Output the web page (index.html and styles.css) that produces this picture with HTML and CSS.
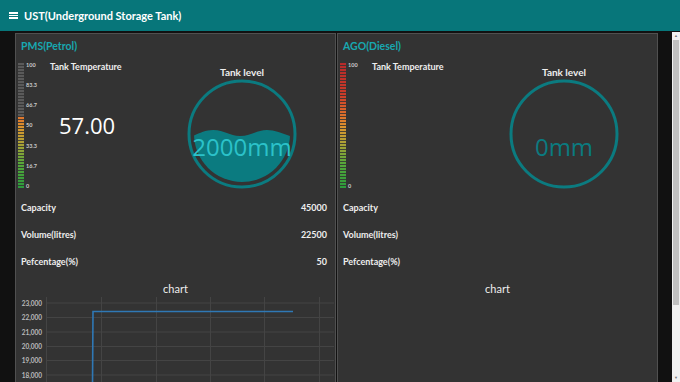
FILE: index.html
```html
<!DOCTYPE html>
<html lang="en">
<head>
    <meta charset="UTF-8">
    <meta name="viewport" content="width=device-width, initial-scale=1.0">
    <title>UST(Underground Storage Tank)</title>
    <link rel="stylesheet" href="styles.css">
</head>
<body>
    <div class="toolbar">
        <span class="menu-icon"><i></i><i></i><i></i></span>
        <span class="toolbar-title">UST(Underground Storage Tank)</span>
    </div>
    <div class="main">
        <div class="groups">
            <div class="group">
                <div class="group-title">PMS(Petrol)</div>
                <div class="top-row">
                    <div class="level-gauge">
                        <div class="bar"><div class="bar-empty" style="height: 43%"></div></div>
                        <div class="ticks">
                            <span>100</span><span>83.3</span><span>66.7</span><span>50</span><span>33.3</span><span>16.7</span><span>0</span>
                        </div>
                    </div>
                    <div class="temp">
                        <div class="widget-label">Tank Temperature</div>
                        <div class="temp-value">57.00</div>
                    </div>
                    <div class="tank">
                        <div class="tank-label">Tank level</div>
                        <svg class="tank-svg" width="110" height="110" viewBox="0 0 110 110">
                            <defs>
                                <clipPath id="innerPms"><circle cx="55" cy="55" r="48"/></clipPath>
                            </defs>
                            <circle cx="55" cy="55" r="53" fill="none" stroke="#0b7b80" stroke-width="3"/>
                            <path clip-path="url(#innerPms)" fill="#0b7b80"
                                  d="M0 59 C8 57 16 51 26 51 C38 51 42 57 53 57 C64 57 70 51 80 51 C90 51 100 57 110 59 L110 110 L0 110 Z"/>
                            <text class="tank-text light" x="55" y="77">2000mm</text>
                        </svg>
                    </div>
                </div>
                <div class="stat"><span>Capacity</span><span>45000</span></div>
                <div class="stat"><span>Volume(litres)</span><span>22500</span></div>
                <div class="stat"><span>Pefcentage(%)</span><span>50</span></div>
                <div class="chart-title">chart</div>
                <svg class="chart" width="318" height="90" viewBox="0 0 318 90">
                    <g class="grid">
                        <line x1="30" y1="6" x2="318" y2="6"/>
                        <line x1="30" y1="20.5" x2="318" y2="20.5"/>
                        <line x1="30" y1="35" x2="318" y2="35"/>
                        <line x1="30" y1="49.5" x2="318" y2="49.5"/>
                        <line x1="30" y1="63.5" x2="318" y2="63.5"/>
                        <line x1="30" y1="78" x2="318" y2="78"/>
                        <line x1="30.5" y1="0" x2="30.5" y2="90"/>
                        <line x1="85.5" y1="0" x2="85.5" y2="90"/>
                        <line x1="140.5" y1="0" x2="140.5" y2="90"/>
                        <line x1="194.5" y1="0" x2="194.5" y2="90"/>
                        <line x1="248.5" y1="0" x2="248.5" y2="90"/>
                        <line x1="303.5" y1="0" x2="303.5" y2="90"/>
                    </g>
                    <g class="axis">
                        <text x="26" y="8.5">23,000</text>
                        <text x="26" y="23">22,000</text>
                        <text x="26" y="37.5">21,000</text>
                        <text x="26" y="52">20,000</text>
                        <text x="26" y="66">19,000</text>
                        <text x="26" y="80.5">18,000</text>
                    </g>
                    <polyline class="series" points="76.5,90 77,14.5 277,14.5"/>
                </svg>
            </div>
            <div class="group">
                <div class="group-title">AGO(Diesel)</div>
                <div class="top-row">
                    <div class="level-gauge">
                        <div class="bar"></div>
                        <div class="ticks">
                            <span>100</span><span>0</span>
                        </div>
                    </div>
                    <div class="temp">
                        <div class="widget-label">Tank Temperature</div>
                    </div>
                    <div class="tank">
                        <div class="tank-label">Tank level</div>
                        <svg class="tank-svg" width="110" height="110" viewBox="0 0 110 110">
                            <circle cx="55" cy="55" r="53" fill="none" stroke="#0b7b80" stroke-width="3"/>
                            <text class="tank-text" x="55" y="77">0mm</text>
                        </svg>
                    </div>
                </div>
                <div class="stat"><span>Capacity</span><span></span></div>
                <div class="stat"><span>Volume(litres)</span><span></span></div>
                <div class="stat"><span>Pefcentage(%)</span><span></span></div>
                <div class="chart-title">chart</div>
            </div>
        </div>
        <div class="scrollbar">
            <div class="scroll-arrow">&#9650;</div>
            <div class="scroll-track"><div class="scroll-thumb"></div></div>
            <div class="scroll-arrow">&#9660;</div>
        </div>
    </div>
</body>
</html>
```

FILE: styles.css
```css
body {
    margin: 0;
    background-color: #111111;
    font-family: Lato, "Open Sans", sans-serif;
    color: #eeeeee;
    height: 382px;
    overflow: hidden;
}
.toolbar {
    height: 31px;
    background-color: #07767a;
    display: flex;
    align-items: center;
    padding-left: 9px;
    color: #ffffff;
}
.menu-icon {
    display: flex;
    flex-direction: column;
    gap: 1px;
    width: 9px;
    margin-right: 6px;
}
.menu-icon i {
    display: block;
    height: 1.5px;
    background: #ffffff;
}
.toolbar-title {
    font-weight: bold;
    font-size: 11px;
}
.main {
    display: flex;
    height: 351px;
    overflow: hidden;
}
.groups {
    flex: 1;
    display: flex;
    gap: 1px;
    padding: 2px 0 0 15px;
    align-items: flex-start;
}
.group {
    width: 319px;
    min-height: 360px;
    background-color: #333333;
    border: 1px solid #505050;
}
.group-title {
    color: #17a8b0;
    font-weight: bold;
    font-size: 10.5px;
    line-height: 15px;
    padding: 5px 0 0 5px;
}
.top-row {
    display: flex;
    margin-top: 8px;
    height: 127px;
}
.level-gauge {
    width: 34px;
    display: flex;
    padding-left: 2px;
    box-sizing: border-box;
}
.bar {
    position: relative;
    width: 6px;
    height: 125px;
    margin-top: 1px;
    background: linear-gradient(to bottom, #b52a2a 0%, #cc3b29 25%, #df7a2c 45%, #d9962e 52%, #a9a236 65%, #58a83a 80%, #2b9b3c 100%);
}
.bar::after {
    content: "";
    position: absolute;
    inset: 0;
    background: repeating-linear-gradient(to bottom, transparent 0, transparent 2px, rgba(51, 51, 51, 0.85) 2px, rgba(51, 51, 51, 0.85) 3px);
}
.bar-empty {
    background-color: #5a5a5a;
}
.ticks {
    display: flex;
    flex-direction: column;
    justify-content: space-between;
    margin-left: 2px;
    height: 127px;
    font-size: 5.5px;
    line-height: 6px;
    font-weight: bold;
    color: #cccccc;
}
.temp {
    width: 137px;
}
.widget-label {
    font-size: 9px;
    font-weight: bold;
    line-height: 10px;
}
.temp-value {
    font-family: "Open Sans", sans-serif;
    font-size: 22px;
    font-weight: 500;
    line-height: 26px;
    margin: 40px 0 0 9px;
    color: #ffffff;
}
.tank {
    width: 110px;
    display: flex;
    flex-direction: column;
    align-items: center;
}
.tank-label {
    font-size: 10px;
    font-weight: bold;
    line-height: 12px;
    padding-top: 4px;
}
.tank-svg {
    margin-top: 1px;
}
.tank-text {
    font-family: "Open Sans", sans-serif;
    font-size: 24px;
    text-anchor: middle;
    fill: #0b7b80;
}
.tank-text.light {
    fill: #2bc2c9;
}
.stat {
    display: flex;
    justify-content: space-between;
    height: 27px;
    align-items: center;
    padding: 0 8px 0 5px;
    font-size: 9px;
    font-weight: bold;
}
.top-row + .stat {
    margin-top: 5px;
}
.chart-title {
    text-align: center;
    font-size: 11px;
    line-height: 14px;
    margin-top: 7px;
}
.chart {
    display: block;
    margin-top: 1px;
}
.grid line {
    stroke: #444444;
    stroke-width: 1;
}
.axis text {
    font-family: Lato, sans-serif;
    font-size: 6.5px;
    font-weight: bold;
    fill: #bbbbbb;
    text-anchor: end;
}
.series {
    fill: none;
    stroke: #2f78b5;
    stroke-width: 1.6;
}
.scrollbar {
    width: 8px;
    margin-top: 1px;
    background-color: #f1f1f1;
    display: flex;
    flex-direction: column;
}
.scroll-arrow {
    height: 8px;
    font-size: 4px;
    line-height: 8px;
    text-align: center;
    color: #777777;
}
.scroll-track {
    flex: 1;
    padding: 0 1px;
}
.scroll-thumb {
    height: 265px;
    background-color: #c1c1c1;
}
```
